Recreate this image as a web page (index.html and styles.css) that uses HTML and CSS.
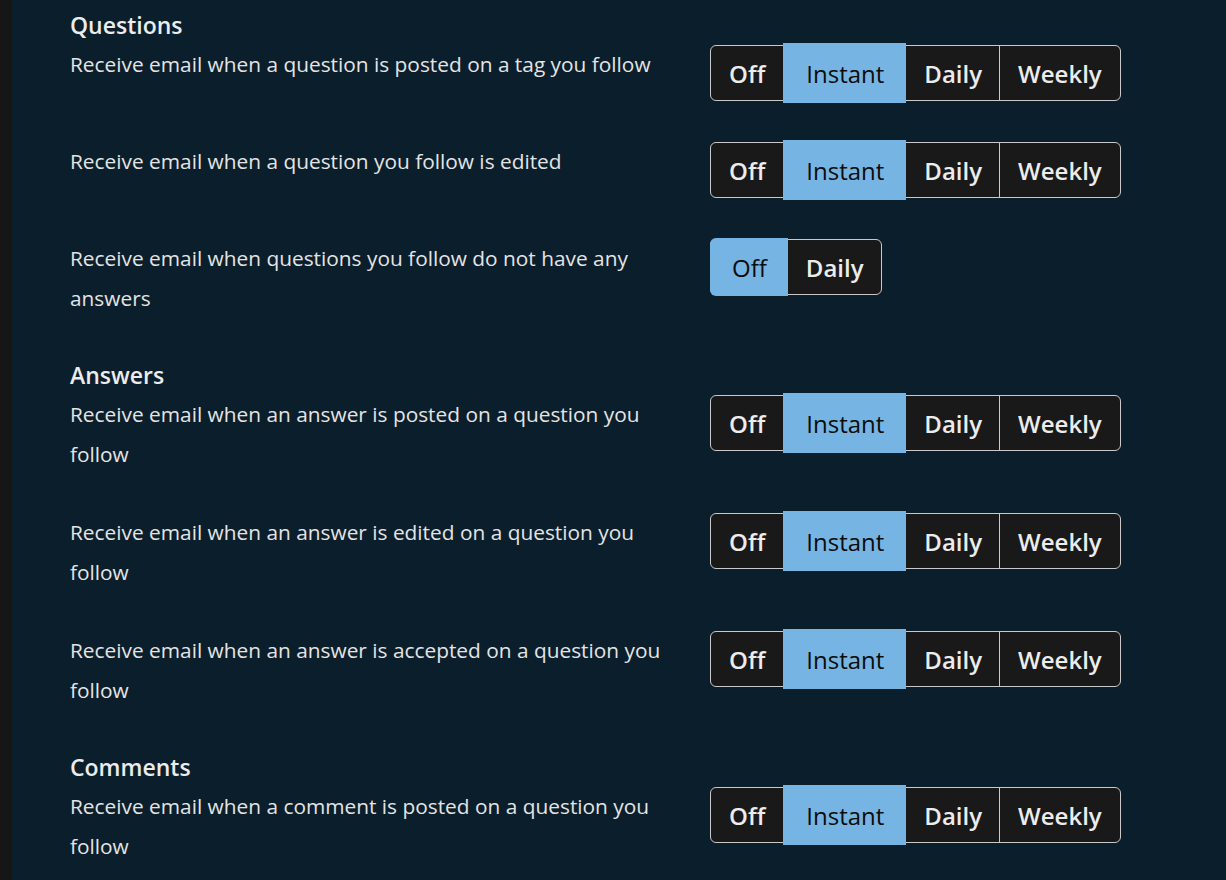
FILE: index.html
```html
<!DOCTYPE html>
<html lang="en">
<head>
<meta charset="utf-8">
<title>Email notification settings</title>
<link rel="stylesheet" href="styles.css">
</head>
<body>
<div class="shell">
  <aside class="rail"></aside>
  <main class="settings">
    <section class="group">
      <h2 class="group-title">Questions</h2>
      <div class="row">
        <p class="label">Receive email when a question is posted on a tag you follow</p>
        <div class="seg">
          <button class="opt off">Off</button><button class="opt on">Instant</button><button class="opt daily">Daily</button><button class="opt">Weekly</button>
        </div>
      </div>
      <div class="row">
        <p class="label">Receive email when a question you follow is edited</p>
        <div class="seg">
          <button class="opt off">Off</button><button class="opt on">Instant</button><button class="opt daily">Daily</button><button class="opt">Weekly</button>
        </div>
      </div>
      <div class="row">
        <p class="label">Receive email when questions you follow do not have any answers</p>
        <div class="seg">
          <button class="opt on first">Off</button><button class="opt daily">Daily</button>
        </div>
      </div>
    </section>
    <section class="group">
      <h2 class="group-title">Answers</h2>
      <div class="row">
        <p class="label">Receive email when an answer is posted on a question you follow</p>
        <div class="seg">
          <button class="opt off">Off</button><button class="opt on">Instant</button><button class="opt daily">Daily</button><button class="opt">Weekly</button>
        </div>
      </div>
      <div class="row">
        <p class="label">Receive email when an answer is edited on a question you follow</p>
        <div class="seg">
          <button class="opt off">Off</button><button class="opt on">Instant</button><button class="opt daily">Daily</button><button class="opt">Weekly</button>
        </div>
      </div>
      <div class="row">
        <p class="label">Receive email when an answer is accepted on a question you follow</p>
        <div class="seg">
          <button class="opt off">Off</button><button class="opt on">Instant</button><button class="opt daily">Daily</button><button class="opt">Weekly</button>
        </div>
      </div>
    </section>
    <section class="group">
      <h2 class="group-title">Comments</h2>
      <div class="row">
        <p class="label">Receive email when a comment is posted on a question you follow</p>
        <div class="seg">
          <button class="opt off">Off</button><button class="opt on">Instant</button><button class="opt daily">Daily</button><button class="opt">Weekly</button>
        </div>
      </div>
    </section>
  </main>
</div>
</body>
</html>
```
FILE: styles.css
```css
html, body {
  margin: 0;
  height: 100%;
  overflow: hidden;
  background: #0b1e2b;
}
body {
  font-family: "Open Sans", "Noto Sans", sans-serif;
  color: #e6e6e6;
}
.shell {
  display: flex;
  min-height: 100%;
}
.rail {
  width: 12px;
  flex: none;
  background: #161616;
}
.settings {
  flex: 1;
  padding: 6px 0 0 58px;
}
.group-title {
  margin: 0;
  font-size: 23px;
  font-weight: 600;
  line-height: 38px;
  color: #ececec;
}
.row {
  display: flex;
  align-items: flex-start;
  gap: 25px;
  margin-bottom: 38px;
}
.group:last-child .row:last-child {
  margin-bottom: 0;
}
.label {
  margin: 0;
  width: 615px;
  font-size: 20.85px;
  line-height: 40px;
  color: #e4e4e4;
}
.seg {
  display: flex;
  height: 56px;
  margin: 1px 0 2px;
  box-sizing: border-box;
  border: 1px solid #c9c9c9;
  border-radius: 6px;
  background: #191919;
}
.opt {
  font-family: inherit;
  font-size: 24px;
  font-weight: 600;
  color: #ececec;
  background: transparent;
  border: 0;
  padding: 0 18px;
  margin: 0;
  height: 100%;
  cursor: pointer;
}
.opt.off {
  padding: 0 18px;
}
.opt.daily {
  padding: 0 17px;
}
.opt:first-child {
  border-radius: 5px 0 0 5px;
}
.opt:last-child {
  border-radius: 0 5px 5px 0;
}
.opt + .opt {
  border-left: 1px solid transparent;
}
.opt:nth-child(3) + .opt {
  border-left-color: #c9c9c9;
}
.opt.on {
  background: #76b4e4;
  color: #0c0c0c;
  font-weight: 500;
  padding: 0 22px;
  margin: -3px 0;
  height: calc(100% + 6px);
  border-radius: 0;
}
.opt.on.first {
  margin: -2px 0 -2px -1px;
  padding: 0 21px 0 22px;
  border-radius: 6px 0 0 6px;
  height: calc(100% + 4px);
}
```
